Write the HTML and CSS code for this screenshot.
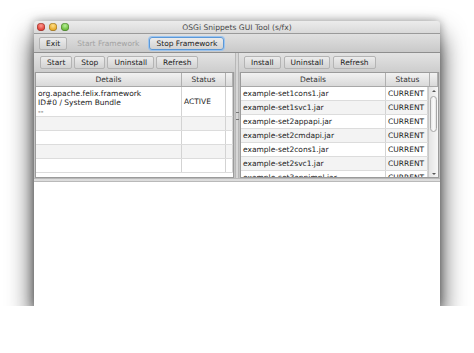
FILE: index.html
```html
<!DOCTYPE html>
<html lang="en">
<head>
    <meta charset="UTF-8">
    <title>OSGi Snippets GUI Tool (s/fx)</title>
    <link rel="stylesheet" href="styles.css">
</head>
<body>
    <div class="window">
        <div class="titlebar">
            <div class="lights">
                <span class="light red"></span>
                <span class="light yellow"></span>
                <span class="light green"></span>
            </div>
            <div class="title">OSGi Snippets GUI Tool (s/fx)</div>
        </div>

        <div class="toolbar">
            <button class="btn">Exit</button>
            <button class="btn" disabled>Start Framework</button>
            <button class="btn focus">Stop Framework</button>
        </div>

        <div class="split">
            <!-- Framework bundles (left) -->
            <div class="pane left">
                <div class="pane-bar">
                    <button class="btn">Start</button>
                    <button class="btn">Stop</button>
                    <button class="btn">Uninstall</button>
                    <button class="btn">Refresh</button>
                </div>
                <div class="table">
                    <div class="row head">
                        <div class="cell">Details</div>
                        <div class="cell">Status</div>
                        <div class="cell"></div>
                    </div>
                    <div class="row tall">
                        <div class="cell lines">org.apache.felix.framework<br>ID#0 / System Bundle<br>--</div>
                        <div class="cell">ACTIVE</div>
                        <div class="cell"></div>
                    </div>
                    <div class="row alt"><div class="cell"></div><div class="cell"></div><div class="cell"></div></div>
                    <div class="row"><div class="cell"></div><div class="cell"></div><div class="cell"></div></div>
                    <div class="row alt"><div class="cell"></div><div class="cell"></div><div class="cell"></div></div>
                    <div class="row"><div class="cell"></div><div class="cell"></div><div class="cell"></div></div>
                </div>
            </div>

            <div class="divider"><span class="grip"></span></div>

            <!-- Repository bundles (right) -->
            <div class="pane right">
                <div class="pane-bar">
                    <button class="btn">Install</button>
                    <button class="btn">Uninstall</button>
                    <button class="btn">Refresh</button>
                </div>
                <div class="table">
                    <div class="row head">
                        <div class="cell">Details</div>
                        <div class="cell">Status</div>
                        <div class="cell"></div>
                    </div>
                    <div class="body">
                        <div class="rows">
                            <div class="row"><div class="cell">example-set1cons1.jar</div><div class="cell">CURRENT</div></div>
                            <div class="row alt"><div class="cell">example-set1svc1.jar</div><div class="cell">CURRENT</div></div>
                            <div class="row"><div class="cell">example-set2appapi.jar</div><div class="cell">CURRENT</div></div>
                            <div class="row alt"><div class="cell">example-set2cmdapi.jar</div><div class="cell">CURRENT</div></div>
                            <div class="row"><div class="cell">example-set2cons1.jar</div><div class="cell">CURRENT</div></div>
                            <div class="row alt"><div class="cell">example-set2svc1.jar</div><div class="cell">CURRENT</div></div>
                            <div class="row"><div class="cell">example-set3appimpl.jar</div><div class="cell">CURRENT</div></div>
                        </div>
                        <div class="scrollbar">
                            <span class="arrow up"></span>
                            <div class="track"><span class="thumb"></span></div>
                            <span class="arrow down"></span>
                        </div>
                    </div>
                </div>
            </div>
        </div>

        <div class="hsplit"></div>

        <div class="output"></div>
    </div>
</body>
</html>
```

FILE: styles.css
```css
body {
    margin: 0;
    background-color: #fff;
    font-family: "DejaVu Sans", Verdana, sans-serif;
    font-size: 7.5px;
    color: #222;
}
.window {
    margin: 21px 0 0 34px;
    width: 406px;
    height: 285px;
    display: flex;
    flex-direction: column;
    background-color: #d6d6d6;
    box-shadow: 0 16px 26px rgba(0, 0, 0, 0.8), 0 0 10px rgba(0, 0, 0, 0.35);
    border-radius: 3px 3px 0 0;
    overflow: hidden;
}
.titlebar {
    height: 12px;
    display: flex;
    align-items: center;
    position: relative;
    background: linear-gradient(#ececec, #d9d9d9);
    border-bottom: 1px solid #9a9a9a;
}
.lights {
    display: flex;
    gap: 4px;
    padding-left: 3px;
    position: relative;
    z-index: 1;
}
.light {
    width: 8px;
    height: 8px;
    border-radius: 50%;
    box-shadow: inset 0 0 0 0.5px rgba(0, 0, 0, 0.35);
}
.red { background: radial-gradient(circle at 50% 35%, #ff9a90, #e0443a 60%, #b92e26); }
.yellow { background: radial-gradient(circle at 50% 35%, #ffe08a, #e6a92a 60%, #b9821a); }
.green { background: radial-gradient(circle at 50% 35%, #b8f09a, #6cbc3c 60%, #4c9426); }
.title {
    position: absolute;
    left: 0;
    right: 0;
    text-align: center;
    color: #4a4a4a;
    font-size: 7.6px;
}
.toolbar {
    height: 18px;
    display: flex;
    align-items: center;
    gap: 3px;
    padding-left: 5px;
    background: linear-gradient(#e0e0e0, #c9c9c9);
    border-bottom: 1px solid #8e8e8e;
}
.btn {
    font-family: inherit;
    font-size: 7.5px;
    color: #222;
    height: 13px;
    padding: 0 6px;
    border: 1px solid #b4b4b4;
    border-radius: 2px;
    background: linear-gradient(#ececec, #d2d2d2);
    line-height: 11px;
}
.btn:disabled {
    color: #a2a2a2;
    border-color: transparent;
    background: transparent;
}
.focus {
    border: 1px solid #5b98d8;
    border-radius: 3px;
    box-shadow: 0 0 0 1px #9cc4ee;
}
.split {
    height: 125px;
    display: flex;
    background: #c4c4c4;
}
.pane {
    display: flex;
    flex-direction: column;
}
.pane.left {
    width: 201px;
}
.pane.right {
    flex: 1;
}
.pane-bar {
    height: 19px;
    flex: none;
    display: flex;
    align-items: center;
    gap: 2px;
    padding-left: 6px;
    background: linear-gradient(#e3e3e3, #cdcdcd);
}
.right .pane-bar {
    padding-left: 5px;
    gap: 3px;
}
.divider {
    width: 4px;
    background: linear-gradient(90deg, #a8a8a8, #dadada 40%, #dadada 60%, #a8a8a8);
    display: flex;
    align-items: center;
    justify-content: center;
}
.grip {
    width: 2px;
    height: 6px;
    border-top: 1px dotted #777;
    border-bottom: 1px dotted #777;
}
.table {
    flex: 1;
    margin: 0 1px 0 1px;
    border: 1px solid #9b9b9b;
    border-top: 0;
    background: #fff;
    overflow: hidden;
    display: flex;
    flex-direction: column;
}
.row {
    display: grid;
    grid-template-columns: 146px 44px 1fr;
    height: 14px;
    flex: none;
    border-bottom: 1px solid #dcdcdc;
    box-sizing: border-box;
}
.right .row {
    grid-template-columns: 145px 44px 1fr;
}
.right .rows .row {
    grid-template-columns: 145px 1fr;
}
.row.alt {
    background: #f3f3f3;
}
.cell {
    border-right: 1px solid #d3d3d3;
    padding-left: 2px;
    line-height: 13px;
    white-space: nowrap;
    overflow: hidden;
}
.row.head {
    height: 15px;
    background: linear-gradient(#f2f2f2, #d9d9d9);
    border-top: 1px solid #9b9b9b;
    border-bottom: 1px solid #a8a8a8;
}
.head .cell {
    text-align: center;
    padding: 0;
    color: #333;
    border-right-color: #b0b0b0;
}
.row.tall {
    height: 30px;
}
.tall .cell {
    line-height: 30px;
}
.tall .lines {
    line-height: 9px;
    padding-top: 2px;
}
.body {
    flex: 1;
    display: flex;
    overflow: hidden;
}
.rows {
    flex: 1;
    overflow: hidden;
}
.scrollbar {
    width: 9px;
    display: flex;
    flex-direction: column;
    background: linear-gradient(90deg, #e4e4e4, #f6f6f6);
    border-left: 1px solid #c8c8c8;
}
.arrow {
    height: 7px;
    display: flex;
    align-items: center;
    justify-content: center;
}
.arrow::after {
    content: "";
    border-left: 2px solid transparent;
    border-right: 2px solid transparent;
}
.up::after { border-bottom: 2px solid #555; }
.down::after { border-top: 2px solid #555; }
.track {
    flex: 1;
    padding-top: 2px;
}
.thumb {
    display: block;
    margin: 0 1px;
    height: 34px;
    border: 1px solid #a8a8a8;
    border-radius: 4px;
    background: linear-gradient(90deg, #e8e8e8, #fdfdfd 60%, #e0e0e0);
}
.hsplit {
    height: 4px;
    background: linear-gradient(#a8a8a8, #e0e0e0 40%, #e0e0e0 60%, #a8a8a8);
}
.output {
    flex: 1;
    background: #fff;
}
```
